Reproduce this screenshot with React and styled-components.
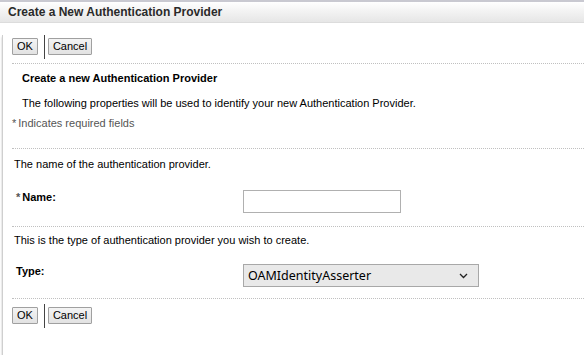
import styled, { createGlobalStyle } from 'styled-components';

const Global = createGlobalStyle`
  body {
    margin: 0;
    background: #fff;
    font-family: "Liberation Sans", sans-serif;
    font-size: 11px;
    color: #000;
  }
`;

// Barra de título
const Header = styled.div`
  height: 20px;
  border-top: 2px solid #c9c9d1;
  border-bottom: 1px solid #dcdcdc;
  background: linear-gradient(#ffffff, #f3f3f3 45%, #e6e6e6);
  display: flex;
  align-items: center;
  padding-left: 8px;
  font-weight: bold;
  font-size: 12px;
  color: #2a2a2a;
`;

const Panel = styled.div`
  margin-left: 2px;
  border-left: 1px solid #cfcfcf;
  border-bottom: 2px solid #a9a9a9;
  box-shadow: 0 2px 2px rgba(0, 0, 0, 0.25);
  height: 326px;
  padding-left: 9px;
  font-size: 11px;
`;

const ButtonBar = styled.div`
  display: flex;
  align-items: center;
  height: 24px;
  margin: ${p => p.top}px 0 4px;
`;

const Button = styled.button`
  font-family: "Liberation Sans", sans-serif;
  font-size: 11px;
  height: 17px;
  padding: 0 4px;
  margin-top: -2px;
  background: linear-gradient(#f4f4f4, #e2e2e2);
  border: 1px solid #a0a0a0;
  border-radius: 1px;
  color: #000;
`;

const Separator = styled.span`
  width: 1px;
  height: 24px;
  background: #444;
  margin: 0 3px 0 6px;
`;

const Section = styled.div`
  border-top: 1px dotted #c0c0c0;
  padding: ${p => p.pad || '0'};
`;

const SubTitle = styled.div`
  font-weight: bold;
  padding: 8px 0 0 10px;
  height: 20px;
`;

const Text = styled.div`
  padding-left: ${p => p.indent || 0}px;
  height: ${p => p.h || 22}px;
  display: flex;
  align-items: center;
  color: ${p => p.muted ? '#555' : '#000'};
`;

const Spacer = styled.div`
  height: ${p => p.h}px;
`;

const Star = styled.span`
  color: #555;
  margin-right: 2px;
`;

const Row = styled.div`
  display: grid;
  grid-template-columns: 227px auto;
  align-items: start;
  padding-left: 2px;
  margin-top: ${p => p.top}px;
`;

const Label = styled.label`
  font-weight: bold;
  line-height: 14px;
`;

const Input = styled.input`
  width: 158px;
  height: 23px;
  box-sizing: border-box;
  border: 1px solid #b0b0b0;
  background: #fff;
`;

const Select = styled.div`
  width: 236px;
  height: 23px;
  box-sizing: border-box;
  border: 1px solid #a8a8a8;
  background: #e9e9e9;
  display: flex;
  align-items: center;
  justify-content: space-between;
  padding: 0 10px 0 4px;
  font-family: "Noto Sans", sans-serif;
  font-size: 12.5px;
`;

const Chevron = () => (
  <svg width="9" height="6" viewBox="0 0 9 6">
    <path d="M1 1 L4.5 4.5 L8 1" fill="none" stroke="#222" strokeWidth="1.3" />
  </svg>
);

const Buttons = ({ top }) => (
  <ButtonBar top={top}>
    <Button>OK</Button>
    <Separator />
    <Button>Cancel</Button>
  </ButtonBar>
);

const App = () => (
  <>
    <Global />
    <Header>Create a New Authentication Provider</Header>
    <Panel>
      <Buttons top={12} />
      <Section>
        <SubTitle>Create a new Authentication Provider</SubTitle>
        <Text indent={10}>The following properties will be used to identify your new Authentication Provider.</Text>
        <Text muted h={18}><Star>*</Star>Indicates required fields</Text>
        <Spacer h={16} />
      </Section>
      <Section pad="4px 0 0 2px">
        <Text>The name of the authentication provider.</Text>
        <Row top={15}>
          <Label><Star>*</Star>Name:</Label>
          <Input />
        </Row>
        <Spacer h={13} />
      </Section>
      <Section pad="2px 0 0 2px">
        <Text>This is the type of authentication provider you wish to create.</Text>
        <Row top={13}>
          <Label>Type:</Label>
          <Select>OAMIdentityAsserter<Chevron /></Select>
        </Row>
        <Spacer h={11} />
      </Section>
      <Section>
        <Buttons top={5} />
      </Section>
    </Panel>
  </>
);

export default App;
